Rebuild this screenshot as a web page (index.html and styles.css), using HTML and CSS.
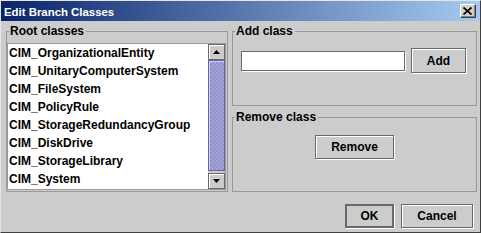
FILE: index.html
```html
<!DOCTYPE html>
<html>
<head>
<meta charset="utf-8">
<title>Edit Branch Classes</title>
<link rel="stylesheet" href="styles.css">
</head>
<body>
<div class="window">
  <div class="titlebar">
    <span class="title">Edit Branch Classes</span>
    <span class="close"><svg width="9" height="8" viewBox="0 0 9 8"><path d="M0.5 0.5 L8.5 7.5 M8.5 0.5 L0.5 7.5" stroke="#000" stroke-width="1.7" fill="none"/></svg></span>
  </div>
  <div class="content">
    <fieldset class="group roots">
      <legend>Root classes</legend>
      <div class="scrollpane">
        <ul class="list">
          <li>CIM_OrganizationalEntity</li>
          <li>CIM_UnitaryComputerSystem</li>
          <li>CIM_FileSystem</li>
          <li>CIM_PolicyRule</li>
          <li>CIM_StorageRedundancyGroup</li>
          <li>CIM_DiskDrive</li>
          <li>CIM_StorageLibrary</li>
          <li>CIM_System</li>
        </ul>
        <div class="scrollbar">
          <div class="arrow"><svg width="7" height="4" viewBox="0 0 7 4"><path d="M3.5 0 L7 4 L0 4 Z" fill="#000"/></svg></div>
          <div class="thumb"></div>
          <div class="arrow"><svg width="7" height="4" viewBox="0 0 7 4"><path d="M0 0 L7 0 L3.5 4 Z" fill="#000"/></svg></div>
        </div>
      </div>
    </fieldset>
    <fieldset class="group addgroup">
      <legend>Add class</legend>
      <div class="addrow">
        <input class="field" type="text">
        <button class="btn add">Add</button>
      </div>
    </fieldset>
    <fieldset class="group removegroup">
      <legend>Remove class</legend>
      <div class="removerow">
        <button class="btn remove">Remove</button>
      </div>
    </fieldset>
    <div class="footer">
      <button class="btn ok">OK</button>
      <button class="btn cancel">Cancel</button>
    </div>
  </div>
</div>
</body>
</html>
```
FILE: styles.css
```css
html, body {
  margin: 0;
  padding: 0;
  background: #cccccc;
}

.window {
  width: 481px;
  height: 233px;
  box-sizing: border-box;
  border-top: 1px solid #e6e6e6;
  border-left: 1px solid #e6e6e6;
  border-right: 1px solid #404040;
  border-bottom: 1px solid #404040;
  background: #cccccc;
  display: flex;
  flex-direction: column;
  font-family: "Liberation Sans", Arial, sans-serif;
  font-weight: bold;
  font-size: 12px;
  color: #000;
}

.titlebar {
  flex: none;
  height: 20px;
  display: flex;
  align-items: center;
  justify-content: space-between;
  padding: 0 4px 0 3px;
  background: linear-gradient(to right, #0a246a, #a6caf0);
}

.title {
  color: #fff;
  font-size: 11.4px;
  font-weight: bold;
  padding-top: 1px;
}

.close {
  width: 16px;
  height: 14px;
  box-sizing: border-box;
  background: #d4d0c8;
  border: 1px solid;
  border-color: #ffffff #404040 #404040 #ffffff;
  box-shadow: inset -1px -1px 0 #808080;
  display: flex;
  align-items: center;
  justify-content: center;
}

.close svg {
  display: block;
  margin: 0 1px 1px 0;
}

.content {
  flex: 1;
  display: grid;
  grid-template-columns: 222px 245px;
  grid-template-rows: 82px 82px auto;
  column-gap: 4px;
  row-gap: 4px;
  padding: 3px 2px 0 5px;
}

.group {
  margin: 0;
  padding: 0;
  border: 1px solid #999999;
  min-width: 0;
  box-sizing: border-box;
}

.group legend {
  margin-left: 2px;
  padding: 0 2px 0 1px;
  line-height: 14px;
  font-size: 12px;
}

.roots {
  grid-row: 1 / 3;
  grid-column: 1;
  display: flex;
  flex-direction: column;
  padding: 5px 0 1px 0;
}

.scrollpane {
  flex: 1;
  display: flex;
  border: 1px solid #999999;
  margin-right: 1px;
  background: #ffffff;
}

.list {
  list-style: none;
  margin: 0;
  padding: 0;
  flex: 1;
  background: #ffffff;
}

.list li {
  height: 18px;
  line-height: 18px;
  padding-left: 1px;
  white-space: nowrap;
}

.scrollbar {
  width: 17px;
  display: flex;
  flex-direction: column;
  background: #cccccc;
}

.arrow {
  height: 16px;
  box-sizing: border-box;
  border: 1px solid #6a6a6a;
  box-shadow: inset 1px 1px 0 #ffffff;
  background: #cccccc;
  display: flex;
  align-items: center;
  justify-content: center;
}

.arrow svg {
  display: block;
}

.thumb {
  flex: 1;
  margin: 0 0 2px 0;
  border: 1px solid #66669a;
  box-shadow: inset 1px 1px 0 #ccccff;
  background-color: #9494cc;
  background-image:
    radial-gradient(circle, #c4c4f4 0.5px, transparent 0.8px),
    radial-gradient(circle, #c4c4f4 0.5px, transparent 0.8px);
  background-size: 4px 4px, 4px 4px;
  background-position: 0 0, 2px 2px;
}

.addgroup {
  grid-row: 1;
  grid-column: 2;
}

.addrow {
  display: flex;
  align-items: center;
  padding: 10px 0 0 8px;
}

.field {
  width: 164px;
  height: 20px;
  box-sizing: border-box;
  margin: 0 6px 0 0;
  padding: 0 2px;
  border: 1px solid #6a6a6a;
  box-shadow: 1px 1px 0 #ffffff;
  background: #ffffff;
  font: inherit;
  outline: none;
}

.btn {
  box-sizing: border-box;
  margin: 0;
  padding: 0;
  border: 1px solid #6a6a6a;
  box-shadow: 1px 1px 0 #ffffff, inset 1px 1px 0 #ffffff;
  background: #cccccc;
  font-family: "Liberation Sans", Arial, sans-serif;
  font-weight: bold;
  font-size: 12px;
  color: #000;
  text-align: center;
}

.add {
  width: 55px;
  height: 25px;
}

.removegroup {
  grid-row: 2;
  grid-column: 2;
}

.removerow {
  display: flex;
  justify-content: center;
  padding-top: 11px;
}

.remove {
  width: 79px;
  height: 24px;
}

.footer {
  grid-row: 3;
  grid-column: 1 / 3;
  display: flex;
  justify-content: flex-end;
  gap: 7px;
  padding: 8px 4px 0 0;
}

.ok {
  width: 49px;
  height: 24px;
  border: 2px solid #6a6a6a;
  box-shadow: 1px 1px 0 #ffffff;
}

.cancel {
  width: 72px;
  height: 24px;
}
```
